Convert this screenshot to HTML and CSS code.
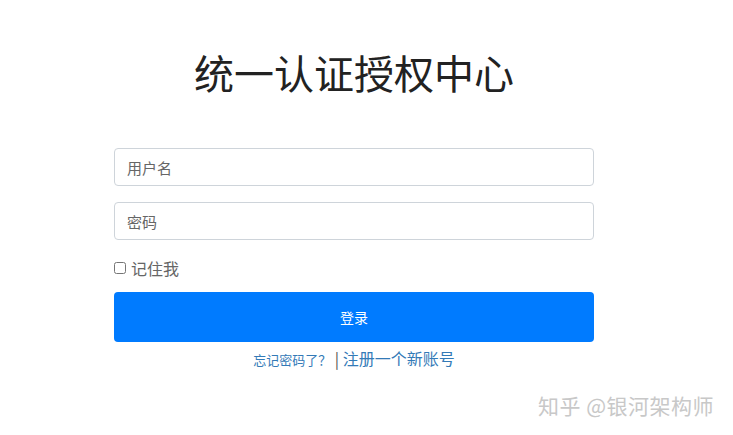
FILE: index.html
```html
<!DOCTYPE html>
<html>
<head>
<meta charset="utf-8">
<link rel="stylesheet" href="styles.css">
</head>
<body>
<div class="page">
  <div class="login">
    <h1 class="title">统一认证授权中心</h1>
    <input class="field" type="text" placeholder="用户名">
    <input class="field" type="password" placeholder="密码">
    <label class="remember"><input type="checkbox" class="check"> 记住我</label>
    <button class="submit">登录</button>
    <div class="links"><a class="forgot">忘记密码了？</a> | <a class="register">注册一个新账号</a></div>
  </div>
  <div class="watermark">知乎 @银河架构师</div>
</div>
</body>
</html>
```
FILE: styles.css
```css
* { box-sizing: border-box; }
body {
  margin: 0;
  background: #fff;
  font-family: "Noto Sans CJK SC", "Liberation Sans", sans-serif;
}
.page {
  position: relative;
  width: 733px;
  height: 435px;
  overflow: hidden;
}
.login {
  width: 480px;
  margin-left: 114px;
  padding-top: 44px;
  display: flex;
  flex-direction: column;
}
.title {
  margin: 0 0 48px 0;
  text-align: center;
  font-size: 40px;
  font-weight: 400;
  line-height: 56px;
  color: #222;
}
.field {
  height: 38px;
  width: 100%;
  border: 1px solid #ced4da;
  border-radius: 4px;
  padding: 0 12px;
  font-size: 15px;
  font-family: inherit;
  margin-bottom: 16px;
  color: #495057;
}
.field::placeholder { color: #666; }
.remember {
  display: flex;
  align-items: center;
  gap: 5px;
  font-size: 16px;
  color: #666;
  margin-top: 0;
  height: 24px;
}
.check {
  margin: 0;
  width: 12px;
  height: 12px;
}
.submit {
  margin-top: 12px;
  height: 50px;
  width: 100%;
  border: none;
  border-radius: 4px;
  background: #007bff;
  color: #fff;
  font-size: 14px;
  font-family: inherit;
}
.links {
  margin-top: 5px;
  text-align: center;
  font-size: 16px;
  color: #555;
  line-height: 22px;
}
.forgot { color: #337ab7; font-size: 13px; }
.register { color: #337ab7; }
.watermark {
  position: absolute;
  left: 538px;
  top: 390px;
  font-size: 21px;
  color: #c8c8c8;
  letter-spacing: 0.5px;
}
```
